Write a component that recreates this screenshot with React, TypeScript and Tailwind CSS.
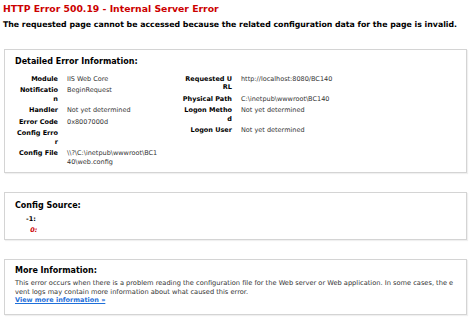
const leftRows: [string, string][] = [
  ['Module', 'IIS Web Core'],
  ['Notification', 'BeginRequest'],
  ['Handler', 'Not yet determined'],
  ['Error Code', '0x8007000d'],
  ['Config Error', ''],
  ['Config File', '\\\\?\\C:\\inetpub\\wwwroot\\BC140\\web.config'],
]

const rightRows: [string, string][] = [
  ['Requested URL', 'http://localhost:8080/BC140'],
  ['Physical Path', 'C:\\inetpub\\wwwroot\\BC140'],
  ['Logon Method', 'Not yet determined'],
  ['Logon User', 'Not yet determined'],
]

function DetailTable({ rows, labelW, valueW }: { rows: [string, string][]; labelW: string; valueW: string }) {
  return (
    <table className="border-collapse text-[6.5px] leading-[8.5px]">
      <tbody>
        {rows.map(([k, v]) => (
          <tr key={k}>
            <th className={`${labelW} break-all py-[1.5px] pr-[9px] text-right align-top font-bold text-black`}>{k}</th>
            <td className={`${valueW} break-all py-[1.5px] text-left align-top text-[#333]`}>{v}</td>
          </tr>
        ))}
      </tbody>
    </table>
  )
}

function Box({ children, className }: { children: React.ReactNode; className?: string }) {
  return (
    <div className={`border border-[#d4d4d4] bg-white px-[10px] shadow-[1px_1px_1px_rgba(0,0,0,0.06)] ${className ?? ''}`}>
      {children}
    </div>
  )
}

export default function App() {
  return (
    <div className="min-h-[320px] w-[474px] bg-white font-['DejaVu_Sans',Verdana,sans-serif] text-black">
      <div className="px-[3px] pt-[3px]">
        <h1 className="text-[9.3px] font-bold leading-[12px] text-[#cc0000]">HTTP Error 500.19 - Internal Server Error</h1>
        <h2 className="mt-[5px] text-[7.8px] font-bold leading-[10px]">
          The requested page cannot be accessed because the related configuration data for the page is invalid.
        </h2>
      </div>

      <div className="ml-[4px] mt-[19px] flex w-[463px] flex-col gap-[19px]">
        {/* Detailed error info */}
        <Box className="h-[124px] pt-[7px]">
          <h3 className="text-[8px] font-bold leading-[10px]">Detailed Error Information:</h3>
          <div className="mt-[6px] flex">
            <div className="w-[162px] pl-px">
              <DetailTable rows={leftRows} labelW="w-[51px]" valueW="w-[94px]" />
            </div>
            <div className="pl-[4px]">
              <DetailTable rows={rightRows} labelW="w-[60px]" valueW="w-[180px]" />
            </div>
          </div>
        </Box>

        {/* Config source */}
        <Box className="h-[48px] pt-[8px]">
          <h3 className="text-[8px] font-bold leading-[10px]">Config Source:</h3>
          <pre className="mt-[3px] pl-[11px] font-['DejaVu_Sans',Verdana,sans-serif] text-[6.5px] font-bold leading-[11px]">
            <div>{'-1: '}</div>
            <div className="pl-[2px] italic text-[#cc0000]">{' 0: '}</div>
          </pre>
        </Box>

        {/* More info */}
        <Box className="h-[56px] pt-[6px]">
          <h3 className="text-[8px] font-bold leading-[10px]">More Information:</h3>
          <p className="mt-[3px] break-all text-[6.65px] leading-[8.5px] text-[#333]">
            This error occurs when there is a problem reading the configuration file for the Web server or Web application. In some cases, the event logs may contain more information about what caused this error.
          </p>
          <a href="#" className="block text-[6.5px] font-bold leading-[8.5px] text-[#1e6fd9] underline">
            View more information »
          </a>
        </Box>
      </div>
    </div>
  )
}
